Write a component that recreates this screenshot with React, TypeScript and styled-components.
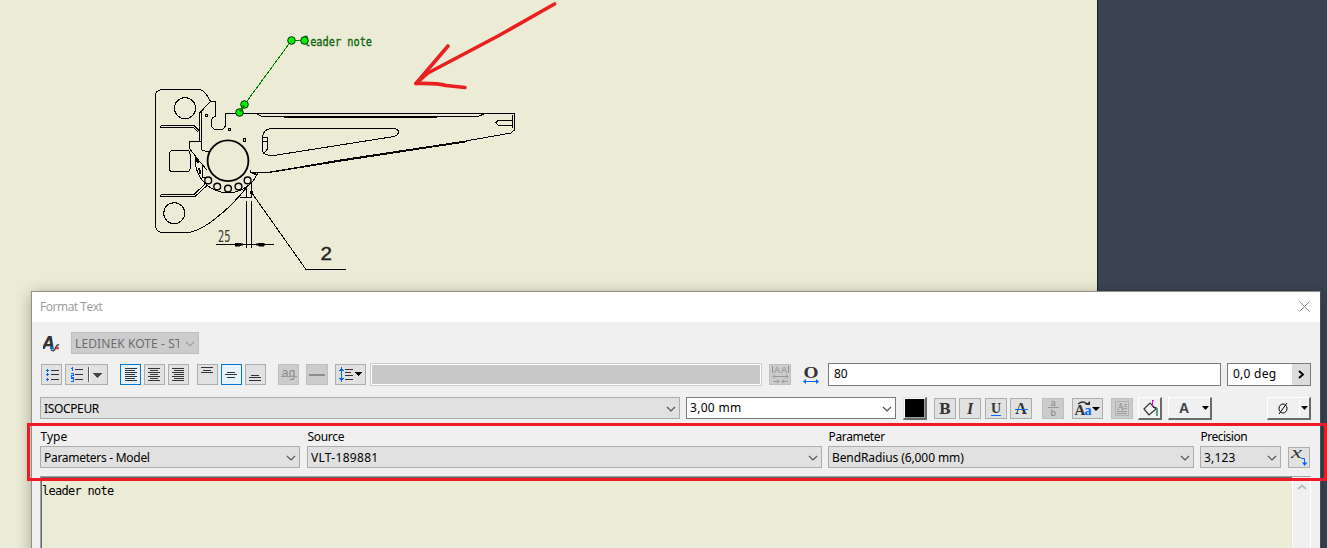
import React from "react";
import styled, { createGlobalStyle } from "styled-components";

const Global = createGlobalStyle`
  * { box-sizing: border-box; }
  html, body { margin: 0; padding: 0; }
  body { overflow: hidden; }
`;

const UI_FONT = '"Noto Sans", "Open Sans", sans-serif';

const Screen = styled.main`
  position: relative;
  width: 1327px;
  height: 548px;
  overflow: hidden;
  font-family: ${UI_FONT};
  font-size: 12px;
  color: #000;
`;

const Workspace = styled.section`
  display: flex;
  height: 100%;
  background: #3b4453;
`;

const Paper = styled.div`
  width: 1098px;
  background: #ecebd5;
  border-right: 1px solid #1c1e22;
`;

const Annotations = styled.svg`
  position: absolute;
  inset: 0;
  pointer-events: none;
`;

const Dialog = styled.section`
  position: absolute;
  left: 31px;
  top: 291px;
  width: 1290px;
  height: 300px;
  border: 1px solid #8f8f85;
  border-right-color: #4a4e56;
  background: #f0f0f0;
  box-shadow: 0 3px 14px rgba(0, 0, 0, 0.3);
`;

const TitleBar = styled.header`
  display: flex;
  align-items: center;
  justify-content: space-between;
  height: 30px;
  padding: 0 10px 2px 8px;
  background: #fff;
  color: #999;
  font-family: "Open Sans", "Noto Sans", sans-serif;
  font-size: 12px;
  letter-spacing: -0.45px;
  svg { display: block; }
`;

const Body = styled.div`
  padding: 10px 9px 0 8px;
`;

const Row = styled.div<{ $h: number; $mt?: number; $align?: string }>`
  display: flex;
  align-items: ${(p) => p.$align ?? "center"};
  height: ${(p) => p.$h}px;
  margin-top: ${(p) => p.$mt ?? 0}px;
`;

const Combo = styled.div<{ $w: number; $ml?: number; $tone?: "white" | "disabled"; $ls?: number }>`
  display: flex;
  align-items: center;
  justify-content: space-between;
  flex: none;
  width: ${(p) => p.$w}px;
  height: 22px;
  margin-left: ${(p) => p.$ml ?? 0}px;
  padding: 0 3px;
  border: 1px solid ${(p) => (p.$tone === "white" ? "#7a7a7a" : p.$tone === "disabled" ? "#bfbfbf" : "#adadad")};
  background: ${(p) => (p.$tone === "white" ? "#fff" : p.$tone === "disabled" ? "#ccc" : "#e1e1e1")};
  color: ${(p) => (p.$tone === "disabled" ? "#6d6d6d" : "#000")};
  letter-spacing: ${(p) => p.$ls ?? 0}px;
  white-space: nowrap;
  svg { flex: none; margin-top: 2px; }
`;

const ComboText = styled.span<{ $clip?: number; $drop?: number }>`
  overflow: hidden;
  line-height: 18px;
  padding-top: ${(p) => p.$drop ?? 0}px;
  ${(p) => (p.$clip ? `width: ${p.$clip}px;` : "")}
`;

const Button = styled.button<{ $w?: number; $ml?: number; $state?: "on" | "off" }>`
  display: flex;
  align-items: center;
  justify-content: center;
  flex: none;
  width: ${(p) => p.$w ?? 22}px;
  height: 21px;
  margin: 0 0 0 ${(p) => p.$ml ?? 0}px;
  padding: 0;
  border: 1px solid ${(p) => (p.$state === "on" ? "#0078d7" : p.$state === "off" ? "#bfbfbf" : "#adadad")};
  background: ${(p) => (p.$state === "on" ? "#e5f1fb" : p.$state === "off" ? "#ccc" : "#e1e1e1")};
  svg { display: block; flex: none; }
`;

const RaisedButton = styled(Button)`
  height: 23px;
  border: solid;
  border-width: 1px 2px 2px 1px;
  border-color: #fff #6b6b6b #6b6b6b #fff;
  background: #f0f0f0;
`;

const Swatch = styled(RaisedButton)`
  border-color: #e3e3e3 #696969 #696969 #e3e3e3;
  background: #000;
  box-shadow: inset 1px 1px #fff, inset -1px -1px #a0a0a0;
`;

const DisabledField = styled.div`
  width: 392px;
  height: 23px;
  margin-left: 4px;
  border: 1px solid #ccc;
  background: #c8c8c8;
  box-shadow: inset 0 0 0 1px #fff;
`;

const Field = styled.div<{ $w: number; $ml: number; $ls?: number }>`
  display: flex;
  align-items: center;
  justify-content: space-between;
  width: ${(p) => p.$w}px;
  height: 23px;
  margin-left: ${(p) => p.$ml}px;
  padding-left: 5px;
  border: 1px solid #7a7a7a;
  background: #fff;
  line-height: 20px;
  letter-spacing: ${(p) => p.$ls ?? 0}px;
  span { padding-bottom: 1px; }
`;

const Stepper = styled.div`
  display: flex;
  align-items: center;
  justify-content: center;
  width: 18px;
  height: 21px;
  background: #dcdcdc;
`;

const IconBox = styled.span<{ $ml: number }>`
  display: flex;
  margin-left: ${(p) => p.$ml}px;
`;

const Labelled = styled.div<{ $w: number; $ml?: number }>`
  display: flex;
  flex-direction: column;
  justify-content: space-between;
  width: ${(p) => p.$w}px;
  height: 39px;
  margin-left: ${(p) => p.$ml ?? 0}px;
`;

const Label = styled.label<{ $ls?: number }>`
  padding-left: 0.5px;
  line-height: 16px;
  letter-spacing: ${(p) => p.$ls ?? 0}px;
`;

const Editor = styled.div`
  display: flex;
  height: 110px;
  margin-top: 8px;
  border-top: 1px solid #a0a0a0;
  border-left: 1px solid #a0a0a0;
  box-shadow: inset 1px 1px #696969;
  background: #ecebd5;
`;

const EditorText = styled.div`
  flex: 1;
  padding: 6px 0 0 1px;
  font-family: "DejaVu Sans Mono", monospace;
  font-size: 12px;
  line-height: 17px;
  letter-spacing: -0.72px;
`;

const ScrollTrack = styled.div`
  display: flex;
  justify-content: center;
  width: 19px;
  padding-top: 7px;
  border: solid #fff;
  border-width: 0 1px;
  background: #f0f0f0;
`;

const Chevron = ({ color = "#555" }: { color?: string }) => (
  <svg width="10" height="8" viewBox="0 0 10 8">
    <path d="M1 2 L5 6 L9 2" fill="none" stroke={color} strokeWidth="1.2" />
  </svg>
);

/** Rows of horizontal strokes: [x, y, width] */
const Strokes = ({ rows, w = 19, children }: { rows: number[][]; w?: number; children?: React.ReactNode }) => (
  <svg width={w} height="19" shapeRendering="crispEdges">
    {rows.map(([x, y, len], i) => (
      <rect key={i} x={x} y={y} width={len} height="1" fill="#333" />
    ))}
    {children}
  </svg>
);

const LINES = [3, 5, 7, 9, 11, 13, 15];
const alignLeft = LINES.map((y, i) => [4, y, i % 2 ? 10 : 12]);
const alignCenter = LINES.map((y, i) => (i % 2 ? [5, y, 8] : [3, y, 12]));
const alignRight = LINES.map((y, i) => (i % 2 ? [5, y, 10] : [3, y, 12]));

const Serif = ({ x, y, size, children, fill = "#333", bold = true, italic = false, family = "'DejaVu Serif', serif" }: {
  x: number; y: number; size: number; children: string; fill?: string; bold?: boolean; italic?: boolean; family?: string;
}) => (
  <text x={x} y={y} fontFamily={family} fontSize={size} fontWeight={bold ? 700 : 400}
    fontStyle={italic ? "italic" : "normal"} fill={fill} textAnchor="middle">
    {children}
  </text>
);

const TIMES = "'Liberation Serif', serif";

const BRACKET = [
  "M162 89.5 H199 Q205 90 210.5 101.5 M162 89.5 Q155.5 90 155.5 96 V225 Q156 232 162 232.5 H190 Q203 229 216 218 Q232 206 247 187",
  "M210.5 101.5 H215.5 V116 Q211 118 211.5 122 V125 Q212 129.5 217 129.5 H221 Q225.5 129 225.5 124 V113.5 H514.5 V130 L511 132.8",
  "M210.5 101.5 L199.5 113 V141 M201.5 112 V149 Q202 151 209 151.5 M189.5 141 H201 M189.5 140.5 V148.5 L200 162 L207 170",
  "M160.5 125.5 H194 L199.5 131 M160.5 127.5 H193.5 L198 132 M160.5 125.5 V127.5",
  "M160.5 194.5 H194 L205 184 M160.5 196.5 H195 L207 185.5 M160.5 194.5 V196.5",
  "M202.5 166 V177.5 H211",
  "M239.5 197.5 H251.5 V183 M246.5 197 V188",
  "M256 113.5 L262 116.5 H478 L484 114",
  "M250 170 L251 172.5 H268 L340 160 L467 140.8 L512 132.8",
  "M272 128.5 H394 Q398.5 129 398.5 132 Q398 135.5 394 136.5 L275 155.3 Q262.5 156 262.5 150 V137 Q263 129 272 128.5 Z",
  "M262.5 137.5 H267.5 V149 L264.5 153 M262.5 141.5 H267.5",
  "M512 120.7 H498 L495.5 122.8 L498 125 H512 M512.5 115 V128",
  "M246.5 201 V248 M251.5 201 V248 M216 244.5 H274",
];

const Drawing = () => (
  <svg width="600" height="285" fill="none" stroke="#000" strokeWidth="1">
    <g shapeRendering="crispEdges">
      {BRACKET.map((d) => <path key={d} d={d} />)}
      <path d="M284 117.5 H437 M268 172.5 L340 161 L467 141.5" strokeWidth="1.4" />
      <rect x="169.5" y="150.5" width="20.5" height="21" rx="3" />
      <circle cx="185" cy="108.2" r="10.6" />
      <circle cx="174.2" cy="213.2" r="10.5" />
      <path d="M195.5 157 A32.5 32.5 0 0 0 257.5 173.5" />
      <path d="M196 157 L198 163 M199 168 L200.5 174 M252 173 L256 174" strokeWidth="2" />
      <circle cx="206.4" cy="115.4" r="1.2" />
      <circle cx="229.8" cy="129.4" r="1.2" />
      <path d="M243.5 138.5 H245 V141.5 H243.5 Z" />
      <path d="M235 243 H240 L244 244.5 L240 246 H235 Z M264 243 H259 L255 244.5 L259 246 H264 Z" fill="#000" strokeWidth="0.5" />
      <path d="M251.5 192.5 L306 269.5 H346" />
      <circle cx="251.5" cy="192.5" r="1" fill="#000" />
    </g>
    <circle cx="228" cy="160.7" r="20.4" strokeWidth="1.8" />
    {[[208.2, 180.4], [217.2, 186.6], [228, 188.6], [238.5, 186.6], [247.6, 180.4]].map(([x, y]) => (
      <circle key={x} cx={x} cy={y} r="3.4" strokeWidth="1.4" fill="#ecebd5" />
    ))}
    <g stroke="none">
      <text x="218" y="242" fontSize="15" fill="#333" fontFamily="'DejaVu Sans Condensed', 'DejaVu Sans', sans-serif" textLength="12.5" lengthAdjust="spacingAndGlyphs">25</text>
      <text x="320.5" y="260" fontSize="19" fill="#222" stroke="#222" strokeWidth="0.4" fontFamily="'Liberation Sans', sans-serif" textLength="11.5" lengthAdjust="spacingAndGlyphs">2</text>
      <text x="304" y="46" fontSize="13" fill="#0a640a" stroke="#0a640a" strokeWidth="0.35"
        fontFamily="'DejaVu Sans Mono', monospace" textLength="68" lengthAdjust="spacingAndGlyphs">leader note</text>
    </g>
    <path d="M239.5 112.5 L244.5 104.5 L291.5 40.5 L304 41" stroke="#008000" shapeRendering="crispEdges" />
    {[[239.5, 112.5], [244.5, 104.5], [291.5, 40.5], [304.5, 40.5]].map(([x, y]) => (
      <circle key={x} cx={x} cy={y} r="3.8" fill="#00f400" stroke="#032003" />
    ))}
    <path d="M240 111.5 L244 105.5" stroke="#008000" strokeWidth="2.5" />
  </svg>
);

const LabelledCombo = ({ label, value, w, ml, ls, lls }: {
  label: string; value: string; w: number; ml?: number; ls?: number; lls?: number;
}) => (
  <Labelled $w={w} $ml={ml}>
    <Label $ls={lls}>{label}</Label>
    <Combo $w={w} $ls={ls}><ComboText $drop={1}>{value}</ComboText><Chevron /></Combo>
  </Labelled>
);

export default function App() {
  return (
    <Screen>
      <Global />
      <Workspace>
        <Paper><Drawing /></Paper>
      </Workspace>

      <Dialog>
        <TitleBar>
          <span>Format Text</span>
          <svg width="11" height="11"><path d="M0.5 0.5 L10.5 10.5 M10.5 0.5 L0.5 10.5" stroke="#888" fill="none" /></svg>
        </TitleBar>
        <Body>
          <Row $h={22}>
            <IconBox $ml={3}>
              <svg width="18" height="18">
                <text x="-0.5" y="14.5" fontFamily="'DejaVu Sans', sans-serif" fontWeight="700" fontStyle="italic" fontSize="17" textLength="12.5" lengthAdjust="spacingAndGlyphs" fill="#333">A</text>
                <path d="M8 16 Q11 18 12.5 14 T16 11" stroke="#444" strokeWidth="1.5" fill="none" />
                <circle cx="8.5" cy="14" r="1.7" fill="#1769b5" /><circle cx="14.5" cy="14" r="1.6" fill="#e23a3a" />
              </svg>
            </IconBox>
            <Combo $w={128} $ml={10} $tone="disabled" $ls={0.1}><ComboText $clip={104} $drop={1}>LEDINEK KOTE - STANDARD</ComboText><Chevron color="#a0a0a0" /></Combo>
          </Row>

          <Row $h={23} $mt={9}>
            <Button $w={21} $ml={1}>
              <Strokes rows={[[9, 5, 8], [9, 9, 8], [9, 14, 8]]}>
                {[5, 9, 14].map((y) => <path key={y} d={`M4 ${y}h3v1h-3zM5 ${y - 1}h1v3h-1z`} fill="#06f" />)}
              </Strokes>
            </Button>
            <Button $w={43} $ml={3}>
              <Strokes w={41} rows={[[9, 4, 8], [9, 9, 8], [9, 14, 8]]}>
                <path d="M6.5 2V6M5 3.5H6.5M5 8.5H7.5V10.5H5.5V12H8M5 13.5H7.5V16.5H5" stroke="#06f" fill="none" />
                <path d="M22.5 2V17" stroke="#555" /><path d="M23.5 2V17" stroke="#fff" />
                <path d="M27 8H36L31.5 13Z" fill="#444" />
              </Strokes>
            </Button>
            <Button $w={21} $ml={12} $state="on"><Strokes rows={alignLeft} /></Button>
            <Button $w={21} $ml={3}><Strokes rows={alignCenter} /></Button>
            <Button $w={21} $ml={3}><Strokes rows={alignRight} /></Button>
            <Button $w={21} $ml={8}><Strokes rows={[[3, 2, 12], [5, 5, 8], [3, 7, 12]]} /></Button>
            <Button $w={21} $ml={3} $state="on"><Strokes rows={[[5, 7, 8], [3, 9, 12], [5, 12, 8]]} /></Button>
            <Button $w={21} $ml={3}><Strokes rows={[[5, 10, 8], [3, 12, 12], [3, 15, 12]]} /></Button>
            <Button $w={21} $ml={12} $state="off">
              <svg width="19" height="19"><text x="2.5" y="12" fontFamily="'DejaVu Sans Mono', monospace" fontSize="13" fill="#8a8a8a" textLength="14" lengthAdjust="spacingAndGlyphs">ag</text><path d="M2 11.5H18" stroke="#999" /></svg>
            </Button>
            <Button $w={22} $ml={7} $state="off"><svg width="16" height="2"><rect width="16" height="2" fill="#8c8c8c" /></svg></Button>
            <Button $w={31} $ml={7}>
              <Strokes w={29} rows={[[9, 4, 8], [9, 7, 6], [9, 10, 8], [9, 14, 8]]}>
                <path d="M5 3V16" stroke="#06f" strokeWidth="1" /><path d="M5.5 2L8 6H3ZM5.5 17L8 13H3Z" fill="#06f" />
                <path d="M19 7H26L22.5 11Z" fill="#000" />
              </Strokes>
            </Button>
            <DisabledField />
            <Button $ml={7} $state="off">
              <svg width="20" height="19">
                <path d="M2.5 1V8M18.5 1V8" stroke="#909090" />
                <text x="4" y="8" fontFamily="'Liberation Sans', sans-serif" fontSize="9" fill="#8a8a8a" textLength="13">AA</text>
                <path d="M3 11.5H18M5 9.5L3 11.5L5 13.5M16 9.5L18 11.5L16 13.5M3 16.5H9M12 16.5H18M7 14.5L9 16.5L7 18.5M14 14.5L12 16.5L14 18.5" stroke="#999" fill="none" />
              </svg>
            </Button>
            <IconBox $ml={12}>
              <svg width="16" height="18">
                <text x="0.5" y="12" fontFamily={TIMES} fontWeight="700" fontSize="16" textLength="15" lengthAdjust="spacingAndGlyphs" fill="#333">O</text>
                <path d="M1 15.5H15" stroke="#06f" /><path d="M0 15.5L3 13V18ZM16 15.5L13 13V18Z" fill="#06f" />
              </svg>
            </IconBox>
            <Field $w={393} $ml={9}><span>80</span></Field>
            <Field $w={84} $ml={6} $ls={0.25}><span>0,0 deg</span>
              <Stepper><svg width="8" height="9"><path d="M2 1L6 4.5L2 8" stroke="#000" strokeWidth="1.8" fill="none" /></svg></Stepper>
            </Field>
          </Row>

          <Row $h={23} $mt={11} $align="flex-start">
            <Combo $w={640} $ls={-0.35}><ComboText $drop={1}>ISOCPEUR</ComboText><Chevron /></Combo>
            <Combo $w={210} $ml={6} $tone="white" $ls={0.3}><ComboText>3,00 mm</ComboText><Chevron /></Combo>
            <Swatch $w={24} $ml={7} aria-label="Colour" />
            <Row $h={23}>
              <Button $ml={7}><svg width="20" height="19"><Serif x={10} y={14.5} size={14}>B</Serif></svg></Button>
              <Button $ml={3}><svg width="20" height="19"><Serif x={10} y={14.5} size={16} italic family={TIMES}>I</Serif></svg></Button>
              <Button $ml={4}><svg width="20" height="19"><Serif x={10} y={13.5} size={14} family={TIMES}>U</Serif><path d="M5 16.5H15" stroke="#06f" /></svg></Button>
              <Button $ml={3}><svg width="20" height="19"><Serif x={10} y={14.5} size={16} family={TIMES}>A</Serif><path d="M4 10.5H17" stroke="#06f" /></svg></Button>
              <Button $ml={10} $state="off">
                <svg width="20" height="19"><g fontFamily="'DejaVu Sans', sans-serif" fontSize="9" fill="#888"><text x="7.5" y="7">a</text><text x="7.5" y="17">b</text></g><path d="M5 8.5H16" stroke="#999" /></svg>
              </Button>
              <Button $w={31} $ml={8}>
                <svg width="29" height="19"><Serif x={7} y={16} size={15} family={TIMES}>A</Serif><Serif x={15} y={16} size={14} fill="#06f" family={TIMES}>a</Serif>
                  <path d="M5 5Q10 1 14 5" stroke="#333" fill="none" strokeWidth="1.4" /><path d="M12 6H17V2Z" fill="#333" /><path d="M19 8H27L23 12Z" fill="#000" /></svg>
              </Button>
              <Button $ml={8} $state="off">
                <svg width="20" height="19"><rect x="3.5" y="2.5" width="13" height="14" fill="none" stroke="#999" strokeDasharray="1 1" />
                  <Serif x={8.5} y={11} size={9} fill="#888" bold={false}>A</Serif><path d="M12 5.5H15M12 7.5H15M12 9.5H15M5 12.5H15M5 14.5H15" stroke="#999" /></svg>
              </Button>
              <RaisedButton $w={24} $ml={5}>
                <svg width="20" height="20"><path d="M4 11L10 5L16 11L9 17Z" fill="#f4f4f4" stroke="#333" strokeWidth="1.2" />
                  <path d="M12.5 9V2.5M12 2.5H14" stroke="#e000d0" /><path d="M13 9.5H16.5" stroke="#333" /><path d="M17 10V18" stroke="#5d9c8c" strokeWidth="2" fill="none" /></svg>
              </RaisedButton>
              <RaisedButton $w={44} $ml={6}>
                <svg width="41" height="20"><text x="10" y="15" fontFamily="'Liberation Sans', sans-serif" fontWeight="700" fontSize="14" fill="#3a3f48">A</text>
                  <path d="M33 8H40L36.5 12Z" fill="#000" /></svg>
              </RaisedButton>
              <RaisedButton $w={44} $ml={55}>
                <svg width="41" height="20"><ellipse cx="15" cy="10.5" rx="4" ry="4.5" stroke="#000" fill="none" /><path d="M11 16L19 5" stroke="#000" />
                  <path d="M31.5 1V19" stroke="#fff" /><path d="M33 8H40L36.5 12Z" fill="#000" /></svg>
              </RaisedButton>
            </Row>
          </Row>

          <Row $h={39} $mt={9} $align="flex-start">
            <LabelledCombo label="Type" value="Parameters - Model" w={260} ls={-0.28} />
            <LabelledCombo label="Source" value="VLT-189881" w={515} ml={7} ls={0.3} lls={-0.3} />
            <LabelledCombo label="Parameter" value="BendRadius (6,000 mm)" w={366} ml={6} ls={-0.1} lls={-0.35} />
            <LabelledCombo label="Precision" value="3,123" w={81} ml={6} ls={0.2} lls={-0.5} />
            <Row $h={39} $align="flex-end">
              <Button $ml={7}>
                <svg width="20" height="19"><text x="2" y="9.5" fontFamily={TIMES} fontStyle="italic" fontSize="17" fill="#333" textLength="11" lengthAdjust="spacingAndGlyphs">x</text>
                  <path d="M12 10.5H15.5V16" stroke="#06f" fill="none" /><path d="M13 14.5H18.5L15.7 18Z" fill="#06f" /></svg>
              </Button>
            </Row>
          </Row>

          <Editor>
            <EditorText>leader note</EditorText>
            <ScrollTrack><svg width="10" height="6"><path d="M1 5L5 1.5L9 5" stroke="#bdbdbd" strokeWidth="1.8" fill="none" /></svg></ScrollTrack>
          </Editor>
        </Body>
      </Dialog>

      <Annotations width="1327" height="548" fill="none" stroke="#ed1c24">
        <rect x="28.5" y="424.5" width="1297" height="55" strokeWidth="3" />
        <g strokeWidth="3.6" strokeLinecap="round" strokeLinejoin="round" stroke="#e8201f">
          <path d="M554.5 4 Q526 20 498 36 Q464 54 428 73 L416 83.5" />
          <path d="M448 46 L416 83.5 Q438 83 446 85.5 L465 87.5" />
        </g>
      </Annotations>
    </Screen>
  );
}
